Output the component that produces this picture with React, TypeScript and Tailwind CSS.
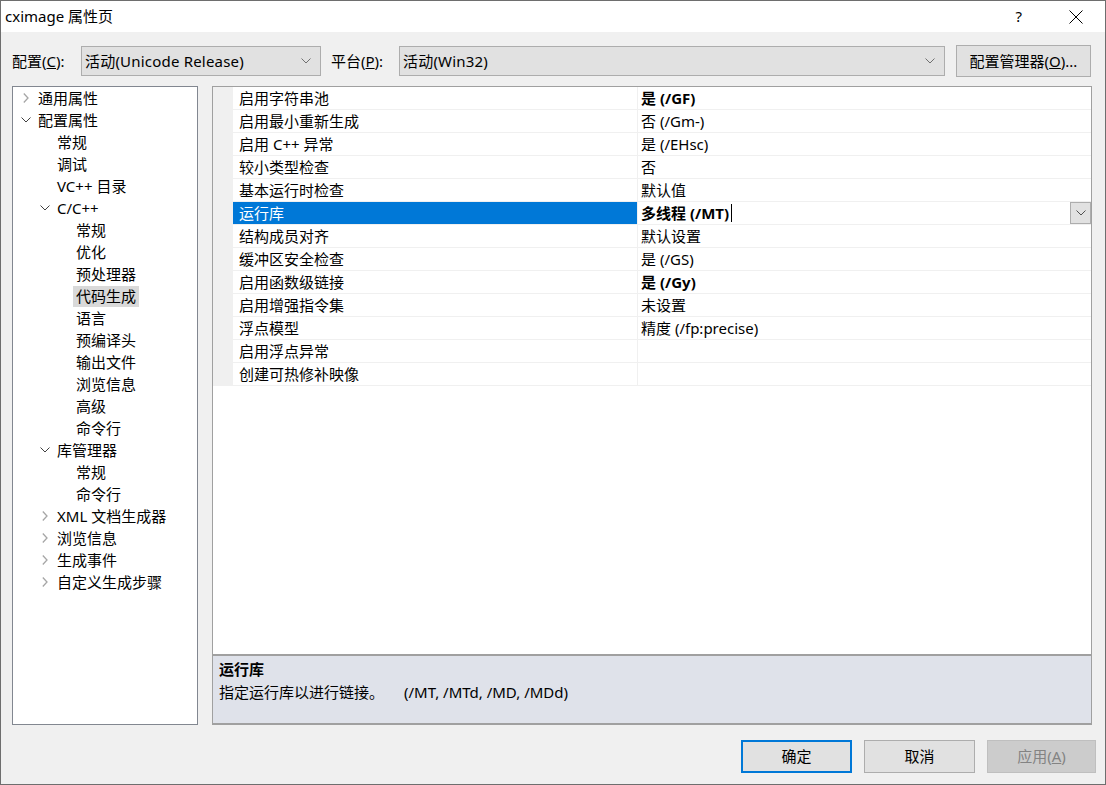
import React from 'react';

const FONT = { fontFamily: '"Noto Sans", "Noto Sans CJK SC", sans-serif' };

type TreeItem = { label: string; level: number; arrow?: 'open' | 'closed'; selected?: boolean };

const TREE: TreeItem[] = [
    { label: '通用属性', level: 0, arrow: 'closed' },
    { label: '配置属性', level: 0, arrow: 'open' },
    { label: '常规', level: 1 },
    { label: '调试', level: 1 },
    { label: 'VC++ 目录', level: 1 },
    { label: 'C/C++', level: 1, arrow: 'open' },
    { label: '常规', level: 2 },
    { label: '优化', level: 2 },
    { label: '预处理器', level: 2 },
    { label: '代码生成', level: 2, selected: true },
    { label: '语言', level: 2 },
    { label: '预编译头', level: 2 },
    { label: '输出文件', level: 2 },
    { label: '浏览信息', level: 2 },
    { label: '高级', level: 2 },
    { label: '命令行', level: 2 },
    { label: '库管理器', level: 1, arrow: 'open' },
    { label: '常规', level: 2 },
    { label: '命令行', level: 2 },
    { label: 'XML 文档生成器', level: 1, arrow: 'closed' },
    { label: '浏览信息', level: 1, arrow: 'closed' },
    { label: '生成事件', level: 1, arrow: 'closed' },
    { label: '自定义生成步骤', level: 1, arrow: 'closed' },
];

type Prop = { name: string; value: string; bold?: boolean; selected?: boolean };

const PROPS: Prop[] = [
    { name: '启用字符串池', value: '是 (/GF)', bold: true },
    { name: '启用最小重新生成', value: '否 (/Gm-)' },
    { name: '启用 C++ 异常', value: '是 (/EHsc)' },
    { name: '较小类型检查', value: '否' },
    { name: '基本运行时检查', value: '默认值' },
    { name: '运行库', value: '多线程 (/MT)', bold: true, selected: true },
    { name: '结构成员对齐', value: '默认设置' },
    { name: '缓冲区安全检查', value: '是 (/GS)' },
    { name: '启用函数级链接', value: '是 (/Gy)', bold: true },
    { name: '启用增强指令集', value: '未设置' },
    { name: '浮点模型', value: '精度 (/fp:precise)' },
    { name: '启用浮点异常', value: '' },
    { name: '创建可热修补映像', value: '' },
];

const ChevronDown = ({ color = '#606060' }: { color?: string }) => (
    <svg width="10" height="6" viewBox="0 0 10 6">
        <polyline points="0.5,0.5 5,5 9.5,0.5" fill="none" stroke={color} strokeWidth="1" />
    </svg>
);

const ChevronRight = ({ color }: { color: string }) => (
    <svg width="6" height="10" viewBox="0 0 6 10">
        <polyline points="0.8,0.5 5,5 0.8,9.5" fill="none" stroke={color} strokeWidth="1.3" />
    </svg>
);

const Select = ({ text, width }: { text: string; width: string }) => (
    <div className={`${width} h-[30px] flex items-center justify-between pl-[3px] pr-[9px] bg-[#e1e1e1] border border-[#adadad] text-[15px] text-black`}>
        <span className="tracking-[0.2px]">{text}</span>
        <ChevronDown color="#707070" />
    </div>
);

export default function App() {
    return (
        <div style={FONT} className="w-[1106px] h-[785px] flex flex-col border border-[#6e6e6e] bg-[#f0f0f0] text-black overflow-hidden">
            {/* Title bar */}
            <div className="h-[31px] shrink-0 bg-white flex items-center pl-[4px]">
                <span className="text-[15px] leading-none">cximage 属性页</span>
                <div className="flex-1" />
                <span className="text-[15px] leading-none mr-[47px]">?</span>
                <svg width="14" height="14" viewBox="0 0 14 14" className="mr-[22px]">
                    <line x1="0.5" y1="0.5" x2="13.5" y2="13.5" stroke="#000" strokeWidth="1" />
                    <line x1="13.5" y1="0.5" x2="0.5" y2="13.5" stroke="#000" strokeWidth="1" />
                </svg>
            </div>

            {/* Config row */}
            <div className="flex items-center mt-[13px] pl-[11px] pr-[14px] text-[15px]">
                <span className="w-[69px]">配置(<span className="underline">C</span>):</span>
                <Select text="活动(Unicode Release)" width="w-[240px]" />
                <span className="ml-[10px] w-[68px]">平台(<span className="underline">P</span>):</span>
                <Select text="活动(Win32)" width="w-[546px]" />
                <div className="ml-[11px] w-[135px] h-[32px] flex items-center justify-center bg-[#e1e1e1] border border-[#adadad]">
                    配置管理器(<span className="underline">O</span>)...
                </div>
            </div>

            {/* Main */}
            <div className="flex gap-[14px] mt-[9px] pl-[11px] h-[639px]">
                {/* Tree */}
                <div className="w-[186px] h-full bg-white border border-[#828790] text-[15px]">
                    {TREE.map((t, i) => (
                        <div
                            key={i}
                            className="h-[22px] flex items-center"
                            style={{ paddingLeft: 5 + t.level * 19 }}
                        >
                            <div className="w-[16px] flex items-center justify-center">
                                {t.arrow === 'open' && <ChevronDown color="#404040" />}
                                {t.arrow === 'closed' && <ChevronRight color="#a6a6a6" />}
                            </div>
                            <span className={`ml-[1px] px-[3px] leading-[21px] ${t.selected ? 'bg-[#d9d9d9]' : ''}`}>{t.label}</span>
                        </div>
                    ))}
                </div>

                {/* Property grid + description */}
                <div className="w-[880px] h-full flex flex-col border border-[#a0a0a0] border-b-0">
                    <div className="flex-1 bg-white text-[15px]">
                        {PROPS.map((p, i) => (
                            <div key={i} className="h-[23px] flex">
                                <div className="w-[20px] bg-[#f0f0f0]" />
                                <div
                                    className={`w-[404px] pl-[6px] flex items-center border-b border-[#f0f0f0] ${p.selected ? 'bg-[#0078d7] text-white' : ''}`}
                                >
                                    {p.name}
                                </div>
                                <div className="flex-1 flex items-center pl-[3px] border-l border-b border-[#f0f0f0]">
                                    <span className={p.bold ? 'font-bold' : ''}>{p.value}</span>
                                    {p.selected && (
                                        <>
                                            <span className="ml-[2px] w-[1px] h-[18px] bg-black" />
                                            <div className="flex-1" />
                                            <div className="w-[21px] h-[22px] flex items-center justify-center bg-[#e1e1e1] border border-[#adadad]">
                                                <ChevronDown color="#505050" />
                                            </div>
                                        </>
                                    )}
                                </div>
                            </div>
                        ))}
                    </div>
                    <div className="h-[71px] shrink-0 bg-[#dfe2ea] border-t-2 border-b-2 border-[#a0a0a0] px-[6px] pt-[3px] text-[15px]">
                        <div className="font-bold leading-[21px]">运行库</div>
                        <div className="leading-[22px] mt-[1px]">
                            指定运行库以进行链接。<span className="ml-[20px]">(/MT, /MTd, /MD, /MDd)</span>
                        </div>
                    </div>
                </div>
            </div>

            {/* Buttons */}
            <div className="flex justify-end gap-[12px] mt-[15px] pr-[9px] text-[15px]">
                <div className="w-[111px] h-[33px] flex items-center justify-center bg-[#e1e1e1] border-2 border-[#0078d7]">确定</div>
                <div className="w-[111px] h-[33px] flex items-center justify-center bg-[#e1e1e1] border border-[#adadad]">取消</div>
                <div className="w-[109px] h-[33px] flex items-center justify-center bg-[#cccccc] border border-[#bfbfbf] text-[#838383]">
                    应用(<span className="underline">A</span>)
                </div>
            </div>
        </div>
    );
}
